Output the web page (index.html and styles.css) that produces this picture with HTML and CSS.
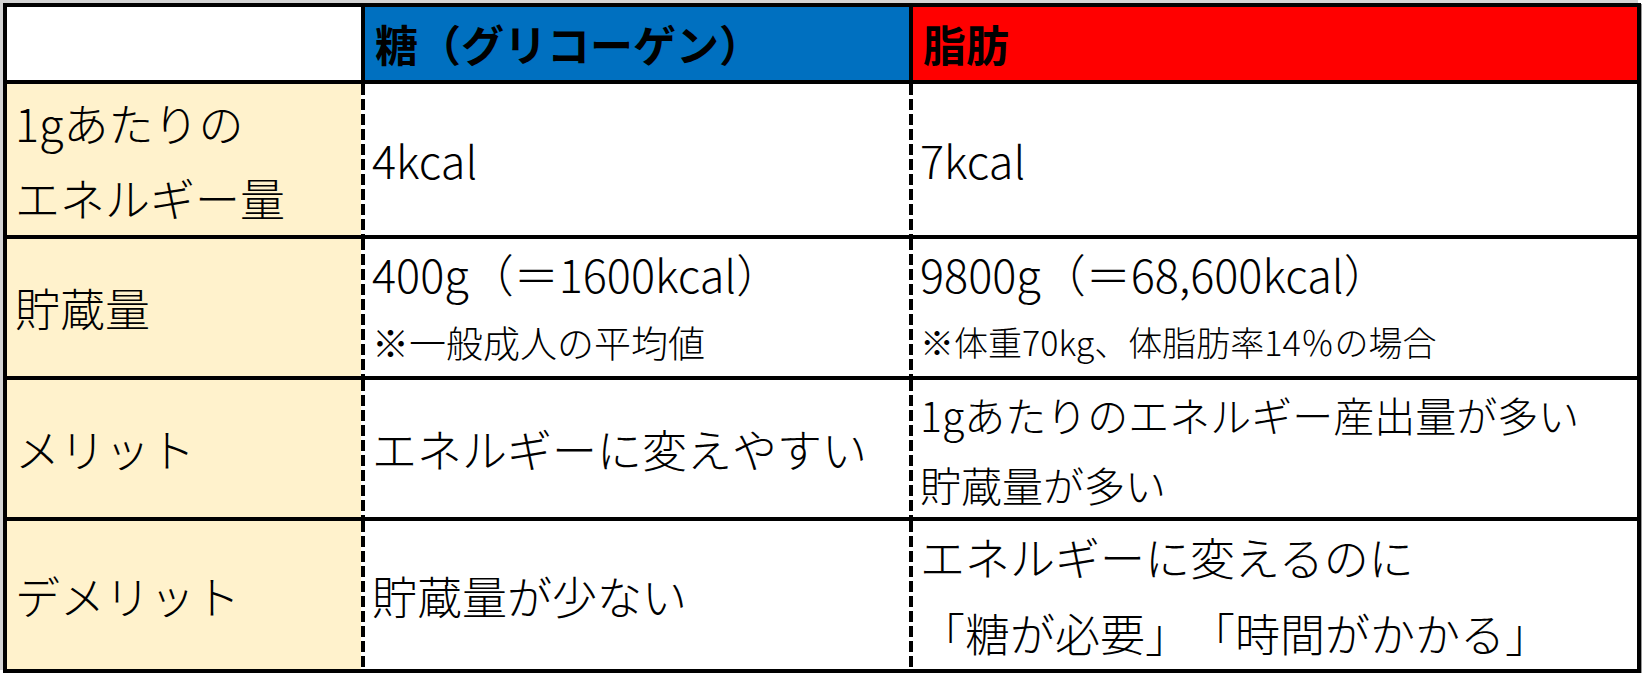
FILE: index.html
```html
<!DOCTYPE html>
<html lang="ja">
<head>
<meta charset="utf-8">
<title>糖と脂肪の比較</title>
<link rel="stylesheet" href="styles.css">
</head>
<body>
<div class="table">
  <div class="cell head blank"></div>
  <div class="cell head blue sep">糖（グリコーゲン）</div>
  <div class="cell head red sep">脂肪</div>

  <div class="cell label"><div class="lines l75"><div>1gあたりの</div><div>エネルギー量</div></div></div>
  <div class="cell dash"><div>4kcal</div></div>
  <div class="cell dash"><div>7kcal</div></div>

  <div class="cell label"><div>貯蔵量</div></div>
  <div class="cell dash"><div class="lines l68"><div>400g（＝1600kcal）</div><div class="note">※一般成人の平均値</div></div></div>
  <div class="cell dash"><div class="lines l68"><div>9800g（＝68,600kcal）</div><div class="note note-narrow">※体重70kg、体脂肪率14％の場合</div></div></div>

  <div class="cell label"><div>メリット</div></div>
  <div class="cell dash"><div>エネルギーに変えやすい</div></div>
  <div class="cell dash"><div class="lines l70 small"><div>1gあたりのエネルギー産出量が多い</div><div>貯蔵量が多い</div></div></div>

  <div class="cell label"><div>デメリット</div></div>
  <div class="cell dash"><div>貯蔵量が少ない</div></div>
  <div class="cell dash"><div class="lines l76"><div>エネルギーに変えるのに</div><div>「糖が必要」「時間がかかる」</div></div></div>
</div>
</body>
</html>
```
FILE: styles.css
```css
html, body {
  margin: 0;
  padding: 0;
  background: #ffffff;
}
body {
  padding: 3px 0 0 3px;
  font-family: "Noto Sans CJK JP", "Noto Sans", sans-serif;
  color: #000;
  text-spacing-trim: space-all;
}
.table {
  display: grid;
  grid-template-columns: 354px 548px 728px;
  grid-template-rows: 73px 151px 137px 137px 148px;
  row-gap: 4px;
  width: fit-content;
  background: #000;
  border: 4px solid #000;
  box-shadow: -3px -3px 0 0 #d3d3d3, 1px 1px 0 0 #9a9a9a;
}
.cell {
  box-sizing: border-box;
  display: flex;
  align-items: center;
  background: #fff;
  font-size: 45px;
  font-weight: 300;
  line-height: 1;
  white-space: nowrap;
  padding-left: 8px;
}
.head {
  font-size: 43px;
  font-weight: 700;
  padding-left: 10px;
}
.head.sep {
  border-left: 4px solid #000;
}
.blank { background: #fff; }
.blue { background: #0070c0; }
.red { background: #ff0000; }
.label {
  background: #fff2cc;
}
.dash {
  padding-left: 11px;
  background-color: #fff;
  background-image: repeating-linear-gradient(to bottom, #000 0 11px, transparent 11px 15px);
  background-size: 4px 100%;
  background-repeat: no-repeat;
  background-position: left top;
}
.lines { display: flex; flex-direction: column; }
.l75 > div { line-height: 75px; }
.l68 > div { line-height: 68px; }
.l70 > div { line-height: 70px; }
.l76 > div { line-height: 76px; }
.note { font-size: 37px; }
.note-narrow { font-size: 34px; }
.small { font-size: 41px; }
```
